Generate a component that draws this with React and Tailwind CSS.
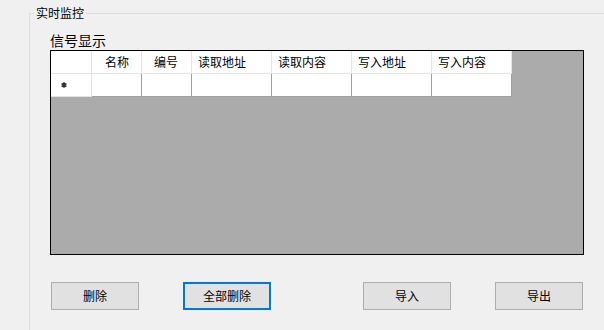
const columns = [
    { title: "名称", width: "w-[50px]", pad: "pl-[13px]" },
    { title: "编号", width: "w-[50px]", pad: "pl-[12px]" },
    { title: "读取地址", width: "w-[80px]", pad: "pl-[6px]" },
    { title: "读取内容", width: "w-[80px]", pad: "pl-[6px]" },
    { title: "写入地址", width: "w-[80px]", pad: "pl-[6px]" },
    { title: "写入内容", width: "w-[80px]", pad: "pl-[6px]" },
];

function NewRowGlyph() {
    return (
        <svg width="6" height="6" viewBox="0 0 6 6" className="block">
            <path d="M3 0.3V5.7M0.6 1.5L5.4 4.5M5.4 1.5L0.6 4.5" stroke="#333" strokeWidth="1.6" />
        </svg>
    );
}

function Button({ label, focused }) {
    return (
        <button
            className={
                focused
                    ? "h-[28px] w-[88px] bg-[#e1e1e1] border-2 border-[#0078d7] text-[12px] text-black"
                    : "h-[28px] w-[88px] bg-[#e1e1e1] border border-[#adadad] text-[12px] text-black"
            }
        >
            {label}
        </button>
    );
}

export default function App() {
    return (
        <div
            className="w-[604px] h-[330px] bg-[#f0f0f0] overflow-hidden text-black"
            style={{ fontFamily: '"Noto Sans CJK SC", "Noto Sans", sans-serif' }}
        >
            <fieldset className="ml-[29px] mt-[5px] w-[620px] h-[340px] border-t border-l border-r-0 border-b-0 border-[#dcdcdc]">
                <legend className="ml-[4px] px-[2px] text-[12px] leading-[16px]">实时监控</legend>

                {/* 信号显示 */}
                <div className="ml-[20px] mt-[9px] h-[20px] text-[14px] leading-[20px]">信号显示</div>

                <div className="ml-[20px] w-[534px] h-[205px] border border-black bg-[#ababab]">
                    {/* header */}
                    <div className="flex w-[461px] h-[23px] bg-white">
                        <div className="w-[41px] border-r border-b border-[#e3e3e3]"></div>
                        {columns.map((c) => (
                            <div
                                key={c.title}
                                className={`${c.width} ${c.pad} border-r border-b border-[#e3e3e3] text-[12px] leading-[22px] whitespace-nowrap`}
                            >
                                {c.title}
                            </div>
                        ))}
                    </div>
                    {/* new row */}
                    <div className="flex w-[461px] h-[23px] bg-white">
                        <div className="w-[41px] border-r border-b border-[#e3e3e3] flex items-center pl-[10px]">
                            <NewRowGlyph />
                        </div>
                        {columns.map((c) => (
                            <div key={c.title} className={`${c.width} border-r border-b border-[#a0a0a0]`}></div>
                        ))}
                    </div>
                </div>

                <div className="flex ml-[21px] mt-[27px]">
                    <Button label="删除" />
                    <div className="ml-[44px]">
                        <Button label="全部删除" focused />
                    </div>
                    <div className="ml-[92px]">
                        <Button label="导入" />
                    </div>
                    <div className="ml-[44px]">
                        <Button label="导出" />
                    </div>
                </div>
            </fieldset>
        </div>
    );
}
